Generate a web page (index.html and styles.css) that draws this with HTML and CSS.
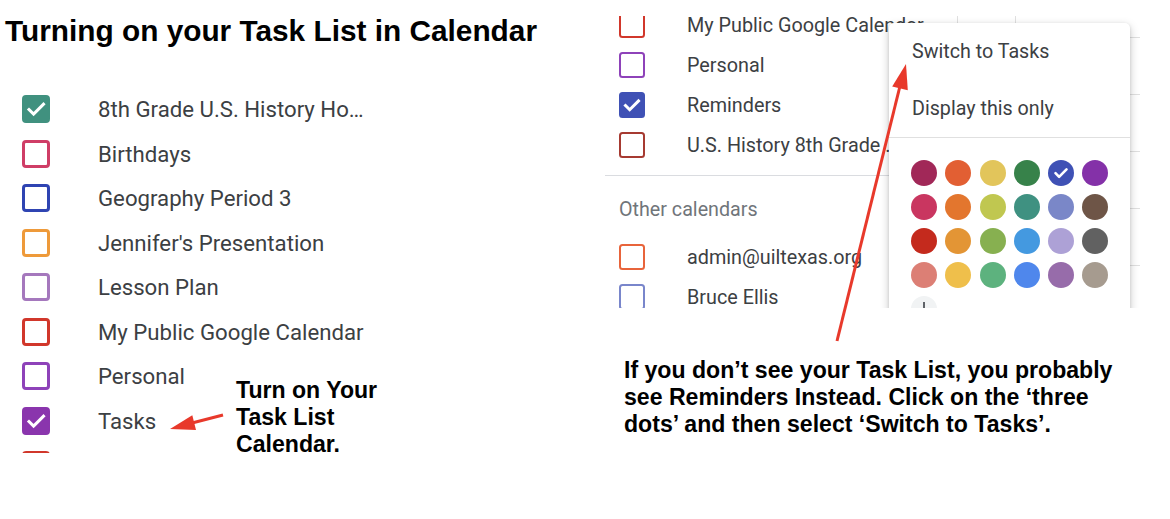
FILE: index.html
```html
<!DOCTYPE html>
<html>
<head>
<meta charset="utf-8">
<link rel="stylesheet" href="styles.css">
</head>
<body>
<div class="slide">
  <div class="col-left">
    <h1 class="title">Turning on your Task List in Calendar</h1>
    <div class="cal-list">
      <div class="row"><span class="cb on c-teal"><svg viewBox="0 0 28 28"><path d="M7 14.5l4.6 4.6L21.5 9.2"/></svg></span><span class="label">8th Grade U.S. History Ho…</span></div>
      <div class="row"><span class="cb c-pink"></span><span class="label">Birthdays</span></div>
      <div class="row"><span class="cb c-blue"></span><span class="label">Geography Period 3</span></div>
      <div class="row"><span class="cb c-orange"></span><span class="label">Jennifer's Presentation</span></div>
      <div class="row"><span class="cb c-lilac"></span><span class="label">Lesson Plan</span></div>
      <div class="row"><span class="cb c-red"></span><span class="label">My Public Google Calendar</span></div>
      <div class="row"><span class="cb c-purple"></span><span class="label">Personal</span></div>
      <div class="row"><span class="cb on c-grape"><svg viewBox="0 0 28 28"><path d="M7 14.5l4.6 4.6L21.5 9.2"/></svg></span><span class="label">Tasks</span></div>
      <div class="row"><span class="cb c-red"></span><span class="label"></span></div>
    </div>
    <p class="note note-left">Turn on Your<br>Task List<br>Calendar.</p>
  </div>

  <div class="col-right">
    <div class="shot">
      <div class="sidebar">
        <div class="side-list">
          <div class="srow"><span class="scb c-red"></span><span class="slabel">My Public Google Calendar</span></div>
          <div class="srow"><span class="scb c-purple"></span><span class="slabel">Personal</span></div>
          <div class="srow"><span class="scb on c-indigo"><svg viewBox="0 0 26 26"><path d="M6.5 13.5l4.2 4.2 8.8-8.8"/></svg></span><span class="slabel">Reminders</span></div>
          <div class="srow"><span class="scb c-brick"></span><span class="slabel">U.S. History 8th Grade ...</span></div>
        </div>
        <div class="side-divider"></div>
        <div class="side-head">Other calendars</div>
        <div class="side-list">
          <div class="srow"><span class="scb c-tangerine"></span><span class="slabel">admin@uiltexas.org</span></div>
          <div class="srow"><span class="scb c-lavender"></span><span class="slabel">Bruce Ellis</span></div>
        </div>
      </div>
      <div class="grid-area"></div>

      <div class="menu">
        <div class="menu-item">Switch to Tasks</div>
        <div class="menu-item">Display this only</div>
        <div class="menu-divider"></div>
        <div class="palette">
          <span class="dot" style="background:#a12858"></span>
          <span class="dot" style="background:#e25f33"></span>
          <span class="dot" style="background:#e2c55b"></span>
          <span class="dot" style="background:#37824a"></span>
          <span class="dot sel" style="background:#3f51b5"><svg viewBox="0 0 26 26"><path d="M7.5 13.2l3.6 3.6 7.4-7.4"/></svg></span>
          <span class="dot" style="background:#8431a8"></span>
          <span class="dot" style="background:#c93660"></span>
          <span class="dot" style="background:#e3762e"></span>
          <span class="dot" style="background:#c0c750"></span>
          <span class="dot" style="background:#3f9181"></span>
          <span class="dot" style="background:#7a87c8"></span>
          <span class="dot" style="background:#6e5547"></span>
          <span class="dot" style="background:#c42a1d"></span>
          <span class="dot" style="background:#e39535"></span>
          <span class="dot" style="background:#87b050"></span>
          <span class="dot" style="background:#4499e0"></span>
          <span class="dot" style="background:#ada1d6"></span>
          <span class="dot" style="background:#616161"></span>
          <span class="dot" style="background:#dc7f75"></span>
          <span class="dot" style="background:#efbf4b"></span>
          <span class="dot" style="background:#5db27e"></span>
          <span class="dot" style="background:#4f87ec"></span>
          <span class="dot" style="background:#976caa"></span>
          <span class="dot" style="background:#a69b8f"></span>
          <span class="dot add"></span>
        </div>
      </div>
    </div>
    <p class="note note-right">If you don’t see your Task List, you probably<br>see Reminders Instead. Click on the ‘three<br>dots’ and then select ‘Switch to Tasks’.</p>
  </div>

  <svg class="arrows" viewBox="0 0 1170 519" width="1170" height="519">
    <line x1="223" y1="415" x2="192" y2="423" class="a-line"/>
    <polygon points="170,429 196,430 192.3,415.3" class="a-head"/>
    <line x1="837" y1="341" x2="900" y2="86" class="a-line"/>
    <polygon points="906,64 907.8,90.2 892.2,86.4" class="a-head"/>
  </svg>
</div>
</body>
</html>
```

FILE: styles.css
```css
html, body {
  margin: 0;
  padding: 0;
  background: #ffffff;
}

.slide {
  position: relative;
  width: 1170px;
  height: 519px;
  overflow: hidden;
  display: grid;
  grid-template-columns: 605px 535px;
  background: #ffffff;
}

/* ---------- left column ---------- */
.col-left {
  position: relative;
}

.title {
  margin: 0;
  padding: 14px 0 0 5px;
  font-family: "Liberation Sans", Arial, sans-serif;
  font-weight: bold;
  font-size: 29.8px;
  line-height: 34px;
  color: #000000;
  white-space: nowrap;
}

.cal-list {
  margin-top: 39px;
  height: 366px;
  overflow: hidden;
}

.row {
  display: flex;
  align-items: center;
  height: 44.5px;
  padding-left: 22px;
  gap: 48px;
}

.cb {
  box-sizing: border-box;
  width: 28px;
  height: 28px;
  flex: 0 0 28px;
  border: 3px solid currentColor;
  border-radius: 4px;
  display: flex;
  align-items: center;
  justify-content: center;
}

.cb.on {
  background: currentColor;
}

.cb svg {
  width: 28px;
  height: 28px;
  flex: 0 0 28px;
}

.cb svg path,
.scb svg path,
.dot svg path {
  fill: none;
  stroke: #ffffff;
  stroke-width: 3;
  stroke-linecap: square;
}

.label {
  font-family: Roboto, "Noto Sans", sans-serif;
  font-size: 22.2px;
  color: #3c4043;
  white-space: nowrap;
}

.c-teal { color: #40917f; }
.c-pink { color: #cf3d66; }
.c-blue { color: #2f44b2; }
.c-orange { color: #ee9a3a; }
.c-lilac { color: #a578bd; }
.c-red { color: #d1372b; }
.c-purple { color: #8e42b9; }
.c-grape { color: #8a35ad; }
.c-indigo { color: #3f51b5; }
.c-brick { color: #a63a31; }
.c-tangerine { color: #e8643b; }
.c-lavender { color: #7986cb; }

.note {
  margin: 0;
  font-family: "Liberation Sans", Arial, sans-serif;
  font-weight: bold;
  font-size: 23.1px;
  line-height: 27px;
  color: #000000;
  white-space: nowrap;
}

.note-left {
  position: absolute;
  left: 236px;
  top: 376.5px;
}

/* ---------- right column ---------- */
.col-right {
  display: flex;
  flex-direction: column;
}

.shot {
  position: relative;
  margin-top: 16px;
  height: 292px;
  overflow: hidden;
  display: flex;
}

.sidebar {
  width: 285px;
  flex: 0 0 285px;
}

.side-list {
  display: flex;
  flex-direction: column;
}

.side-list:first-child {
  margin-top: -11px;
}

.srow {
  display: flex;
  align-items: center;
  height: 40px;
  padding-left: 14px;
  gap: 42px;
}

.scb {
  box-sizing: border-box;
  width: 26px;
  height: 26px;
  flex: 0 0 26px;
  border: 2.7px solid currentColor;
  border-radius: 3.5px;
  display: flex;
  align-items: center;
  justify-content: center;
}

.scb.on {
  background: currentColor;
}

.scb svg {
  width: 26px;
  height: 26px;
  flex: 0 0 26px;
}

.slabel {
  font-family: Roboto, "Noto Sans", sans-serif;
  font-size: 19.8px;
  color: #3c4043;
  white-space: nowrap;
}

.side-divider {
  margin-top: 10px;
  height: 1px;
  background: #dadce0;
}

.side-head {
  padding: 23px 0 16px 14px;
  font-family: Roboto, "Noto Sans", sans-serif;
  font-size: 19.7px;
  line-height: 22px;
  color: #70757a;
}

.grid-area {
  flex: 1;
  background:
    linear-gradient(#e0e0e0, #e0e0e0) 67px 0 / 1px 100% no-repeat,
    linear-gradient(#e0e0e0, #e0e0e0) 125px 0 / 1px 100% no-repeat,
    repeating-linear-gradient(to bottom, transparent 0, transparent 21px, #e0e0e0 21px, #e0e0e0 22px, transparent 22px, transparent 57px);
}

.menu {
  position: absolute;
  left: 284px;
  top: 7px;
  width: 241px;
  height: 320px;
  background: #ffffff;
  border-radius: 5px;
  box-shadow: 0 3px 10px rgba(0, 0, 0, 0.22), 0 1px 3px rgba(0, 0, 0, 0.12);
}

.menu-item {
  height: 57px;
  display: flex;
  align-items: center;
  padding-left: 23px;
  font-family: Roboto, "Noto Sans", sans-serif;
  font-size: 19.7px;
  color: #3c4043;
  white-space: nowrap;
}

.menu-divider {
  height: 1px;
  background: #e0e0e0;
}

.palette {
  display: grid;
  grid-template-columns: repeat(6, 26px);
  column-gap: 8.3px;
  row-gap: 8px;
  padding: 22px 0 0 22px;
}

.dot {
  width: 26px;
  height: 26px;
  border-radius: 50%;
  display: flex;
  align-items: center;
  justify-content: center;
}

.dot svg {
  width: 26px;
  height: 26px;
}

.dot.sel svg path {
  stroke-width: 2.6;
  stroke-linecap: round;
  stroke-linejoin: round;
}

.dot.add {
  position: relative;
  background: #f1f3f4;
}

.dot.add::before {
  content: "";
  position: absolute;
  left: 12px;
  top: 6px;
  width: 2px;
  height: 14px;
  background: #5f6368;
}

.dot.add::after {
  content: "";
  position: absolute;
  left: 6px;
  top: 12px;
  width: 14px;
  height: 2px;
  background: #5f6368;
}

.note-right {
  margin-top: 48.5px;
  padding-left: 19px;
}

/* ---------- arrows overlay ---------- */
.arrows {
  position: absolute;
  left: 0;
  top: 0;
  pointer-events: none;
}

.a-line {
  stroke: #e8392b;
  stroke-width: 3;
}

.a-head {
  fill: #e8392b;
}
```
